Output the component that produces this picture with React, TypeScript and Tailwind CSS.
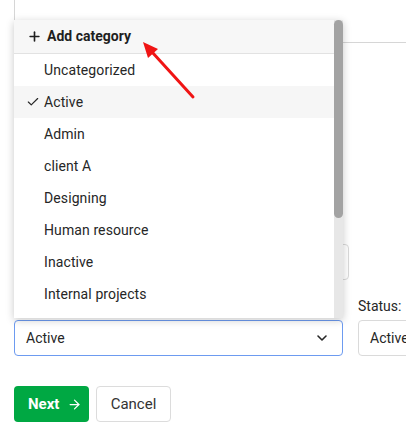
import { Check, ChevronDown, Plus, ArrowRight } from 'lucide-react'

const categories = [
  'Uncategorized',
  'Active',
  'Admin',
  'client A',
  'Designing',
  'Human resource',
  'Inactive',
  'Internal projects',
]

function CategoryMenu() {
  return (
    <div className="absolute left-[14px] top-[20px] w-[329px] h-[298px] bg-white shadow-[0_2px_8px_rgba(0,0,0,0.22)] overflow-hidden">
      <div className="flex h-[34px] items-center gap-[5px] border-b border-[#e2e2e2] bg-[#f7f7f7] pl-[13px] text-[14px] font-bold text-[#1f1f1f]">
        <Plus size={15} strokeWidth={2.6} />
        <span>Add category</span>
      </div>
      {categories.map((c) => (
        <div
          key={c}
          className={`flex h-[32px] items-center text-[14px] tracking-[0.1px] text-[#262626] ${c === 'Active' ? 'bg-[#f6f6f6]' : ''}`}
        >
          <span className="flex w-[30px] justify-end pr-[4px]">
            {c === 'Active' && <Check size={14} strokeWidth={2} />}
          </span>
          <span>{c}</span>
        </div>
      ))}
      <div className="absolute right-0 top-0 h-full w-[9px] bg-[#e7e7e7]">
        <div className="h-[198px] w-full rounded-full bg-[#a3a3a3]" />
      </div>
    </div>
  )
}

export default function App() {
  return (
    <div className="relative w-[406px] h-[440px] overflow-hidden bg-white font-['Roboto',sans-serif] text-[#262626]">
      <div className="ml-[14px] h-[43px] w-[420px] border-l border-b border-[#d6d6d6]" />

      <div className="ml-[14px] mt-[201px] h-[36px] w-[335px] rounded-[4px] border border-[#dadada]" />

      <div className="mt-[16px] flex gap-[15px] px-[14px]">
        <div className="w-[329px] shrink-0">
          {/* label sits under the open menu */}
          <div className="mb-[4px] h-[20px]" />
          <div className="flex h-[36px] items-center justify-between rounded-[4px] border border-[#6d9bf0] pl-[11px] pr-[12px] text-[14px]">
            <span>Active</span>
            <ChevronDown size={16} strokeWidth={2.4} />
          </div>
        </div>
        <div className="w-[120px] shrink-0">
          <div className="mb-[4px] h-[20px] text-[14px] leading-[20px]">Status:</div>
          <div className="flex h-[36px] items-center rounded-[4px] border border-[#dadada] pl-[11px] text-[14px]">
            <span>Active</span>
          </div>
        </div>
      </div>

      <div className="mt-[30px] flex gap-[7px] px-[14px]">
        <button className="flex h-[36px] w-[75px] items-center gap-[8px] rounded-[4px] bg-[#00a843] pl-[14px] text-[15px] font-bold text-white">
          Next
          <ArrowRight size={15} strokeWidth={2} />
        </button>
        <button className="flex h-[36px] w-[75px] items-center justify-center rounded-[4px] border border-[#dcdcdc] bg-white text-[15px] text-[#333]">
          Cancel
        </button>
      </div>

      <CategoryMenu />

      <svg className="absolute left-0 top-0" width="406" height="440" viewBox="0 0 406 440">
        <line x1="193" y1="97" x2="152" y2="52" stroke="#f01414" strokeWidth="3" strokeLinecap="round" />
        <polygon points="143,42 158,49 148,58" fill="#f01414" />
      </svg>
    </div>
  )
}
